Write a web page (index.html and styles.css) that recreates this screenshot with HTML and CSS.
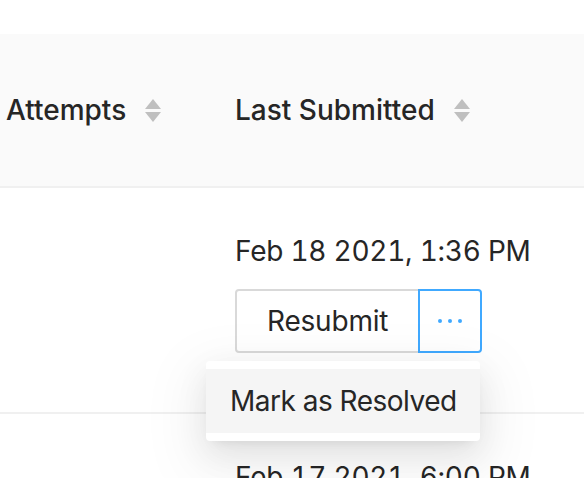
FILE: index.html
```html
<!DOCTYPE html>
<html lang="en">
<head>
<meta charset="utf-8">
<title>Submissions</title>
<link rel="stylesheet" href="styles.css">
</head>
<body>
<div class="page">
  <div class="table">
    <div class="thead">
      <div class="th col-first">
        <span class="th-title">Attempts</span>
        <svg class="sorter" width="16" height="24" viewBox="0 0 16 24"><path d="M8 0 L16 10 L0 10 Z"/><path d="M0 13 L16 13 L8 23 Z"/></svg>
      </div>
      <div class="th col-second">
        <span class="th-title">Last Submitted</span>
        <svg class="sorter" width="16" height="24" viewBox="0 0 16 24"><path d="M8 0 L16 10 L0 10 Z"/><path d="M0 13 L16 13 L8 23 Z"/></svg>
      </div>
    </div>
    <div class="tr">
      <div class="td col-first"></div>
      <div class="td col-second">
        <div class="date">Feb 18 2021, 1:36 PM</div>
        <div class="btn-group">
          <button class="btn btn-main">Resubmit</button>
          <button class="btn btn-more" aria-label="More actions">
            <svg width="24" height="6" viewBox="0 0 24 6"><circle cx="2" cy="3" r="2"/><circle cx="12" cy="3" r="2"/><circle cx="22" cy="3" r="2"/></svg>
          </button>
          <div class="menu">
            <div class="menu-item">Mark as Resolved</div>
          </div>
        </div>
      </div>
    </div>
    <div class="tr">
      <div class="td col-first"></div>
      <div class="td col-second">
        <div class="date">Feb 17 2021, 6:00 PM</div>
      </div>
    </div>
  </div>
</div>
</body>
</html>
```
FILE: styles.css
```css
html, body {
  margin: 0;
  padding: 0;
  background: #ffffff;
  overflow: hidden;
}

.page {
  padding-top: 34px;
  font-family: Inter, "Noto Sans", "Liberation Sans", sans-serif;
  color: #262626;
  font-size: 28px;
}

.thead,
.tr {
  display: grid;
  grid-template-columns: 235px 1fr;
}

.thead {
  background: #fafafa;
  border-bottom: 2px solid #f0f0f0;
  height: 152px;
}

.th {
  display: flex;
  align-items: center;
  gap: 19px;
  font-weight: 500;
}

.col-first {
  padding-left: 6px;
}

.sorter {
  fill: #bfbfbf;
  margin-top: 2px;
}

.tr {
  border-bottom: 2px solid #f0f0f0;
  height: 224px;
}

.td.col-second {
  padding-top: 41px;
}

.date {
  line-height: 44px;
  font-variant-numeric: tabular-nums;
  letter-spacing: -0.25px;
}

.btn-group {
  position: relative;
  display: flex;
  margin-top: 16px;
}

.btn {
  font: inherit;
  color: #262626;
  background: #ffffff;
  height: 64px;
  line-height: 44px;
  border: 2px solid #d9d9d9;
  margin: 0;
  box-sizing: border-box;
}

.btn-main {
  padding: 0 30px;
  border-radius: 4px 0 0 4px;
  letter-spacing: -0.2px;
}

.btn-more {
  width: 64px;
  padding: 0;
  margin-left: -2px;
  border-color: #40a9ff;
  border-radius: 0 4px 4px 0;
  display: flex;
  align-items: center;
  justify-content: center;
}

.btn-more svg {
  fill: #40a9ff;
}

.menu {
  position: absolute;
  top: 72px;
  left: -29px;
  width: 274px;
  padding: 8px 0;
  background: #ffffff;
  border-radius: 4px;
  box-shadow: 0 6px 12px -8px rgba(0, 0, 0, 0.12), 0 12px 32px 0 rgba(0, 0, 0, 0.08), 0 18px 56px 16px rgba(0, 0, 0, 0.05);
}

.menu-item {
  padding: 10px 24px;
  line-height: 44px;
  background: #f5f5f5;
  white-space: nowrap;
  letter-spacing: -0.5px;
}
```
